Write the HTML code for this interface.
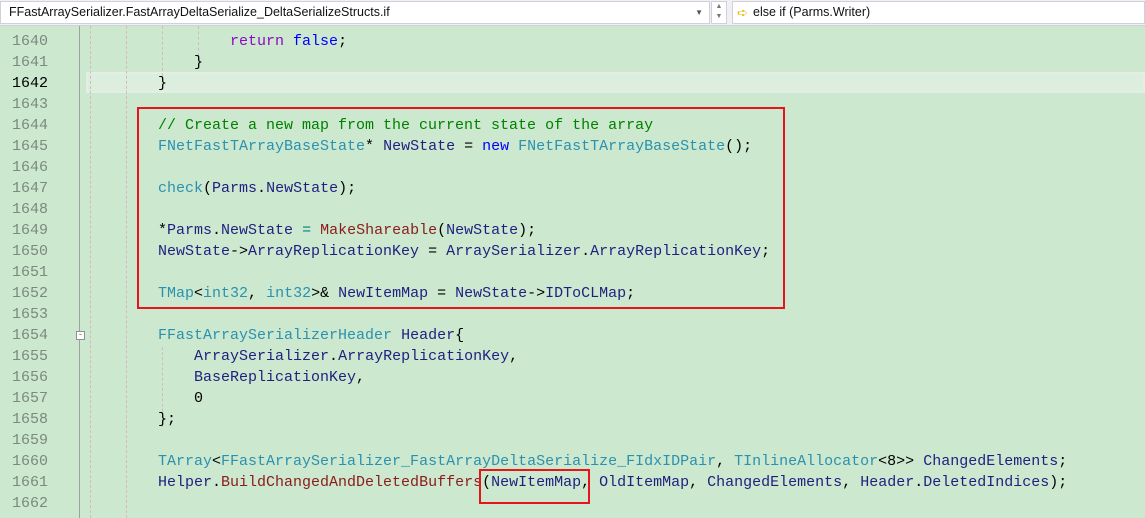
<!DOCTYPE html>
<html><head><meta charset="utf-8">
<style>
*{margin:0;padding:0;box-sizing:border-box}
body{width:1145px;height:518px;overflow:hidden;background:#cce8cf;position:relative;font-family:"Liberation Mono",monospace}
#hdr{position:absolute;left:0;top:0;width:1145px;height:26px;background:#f0f0f5;border-bottom:1px solid #cfd0d8}
.box{position:absolute;top:1px;height:23px;background:#fff;border:1px solid #d0d0da;font-family:"Liberation Sans",sans-serif;font-size:12.5px;line-height:21px;color:#111}
#gut{position:absolute;left:0;top:26px;width:80px;height:492px;border-right:1px solid #a0a0a0}
.ln{position:absolute;left:12px;font-size:15px;color:#7a8a7d;height:21px;line-height:21px}
.cl{position:absolute;left:158px;font-size:15px;white-space:pre;height:21px;line-height:21px;color:#000}
.g{position:absolute;width:0;border-left:1px dashed #d8b8c0}
.t{color:#2b91af}.v{color:#1f1f80}.k{color:#0000ff}.c{color:#008000}.f{color:#8b1c1c}.p{color:#8f08c4}.o{color:#008080}
.red{position:absolute;border:2px solid #e8141c}
</style></head><body>
<div id="hdr">
 <div class="box" style="left:0;width:710px;padding-left:8px">FFastArraySerializer.FastArrayDeltaSerialize_DeltaSerializeStructs.if<span style="position:absolute;right:6px;top:0;font-size:8px;color:#555">▼</span></div>
 <div class="box" style="left:711px;width:16px;font-size:7px;line-height:10px;text-align:center;color:#777">▲<br>▼</div>
 <div class="box" style="left:732px;width:413px;padding-left:20px"><span style="position:absolute;left:4px;top:0;color:#e8b800;font-size:13px">➪</span>else if (Parms.Writer)</div>
</div>
<div id="gut"></div>
<div style="position:absolute;left:86px;top:72px;width:1059px;height:21px;background:#dcefdf;border:2px solid #e4eee6"></div>
<div style="position:absolute;left:76px;top:331px;width:9px;height:9px;border:1px solid #909090;background:#fff;font-size:9px;line-height:6px;text-align:center;color:#666">-</div>
<div class="g" style="left:90px;top:26px;height:492px"></div>
<div class="g" style="left:126px;top:26px;height:492px"></div>
<div class="g" style="left:162px;top:26px;height:50px"></div>
<div class="g" style="left:198px;top:26px;height:30px"></div>
<div class="g" style="left:162px;top:347px;height:80px"></div>

<div class="ln" style="top:31px">1640</div>
<div class="ln" style="top:52px">1641</div>
<div class="ln" style="top:73px;color:#000">1642</div>
<div class="ln" style="top:94px">1643</div>
<div class="ln" style="top:115px">1644</div>
<div class="ln" style="top:136px">1645</div>
<div class="ln" style="top:157px">1646</div>
<div class="ln" style="top:178px">1647</div>
<div class="ln" style="top:199px">1648</div>
<div class="ln" style="top:220px">1649</div>
<div class="ln" style="top:241px">1650</div>
<div class="ln" style="top:262px">1651</div>
<div class="ln" style="top:283px">1652</div>
<div class="ln" style="top:304px">1653</div>
<div class="ln" style="top:325px">1654</div>
<div class="ln" style="top:346px">1655</div>
<div class="ln" style="top:367px">1656</div>
<div class="ln" style="top:388px">1657</div>
<div class="ln" style="top:409px">1658</div>
<div class="ln" style="top:430px">1659</div>
<div class="ln" style="top:451px">1660</div>
<div class="ln" style="top:472px">1661</div>
<div class="ln" style="top:493px">1662</div>

<div class="cl" style="top:31px">        <span class="p">return</span> <span class="k">false</span>;</div>
<div class="cl" style="top:52px">    }</div>
<div class="cl" style="top:73px">}</div>
<div class="cl" style="top:115px"><span class="c">// Create a new map from the current state of the array</span></div>
<div class="cl" style="top:136px"><span class="t">FNetFastTArrayBaseState</span>* <span class="v">NewState</span> = <span class="k">new</span> <span class="t">FNetFastTArrayBaseState</span>();</div>
<div class="cl" style="top:178px"><span class="t">check</span>(<span class="v">Parms</span>.<span class="v">NewState</span>);</div>
<div class="cl" style="top:220px">*<span class="v">Parms</span>.<span class="v">NewState</span> <span class="o">=</span> <span class="f">MakeShareable</span>(<span class="v">NewState</span>);</div>
<div class="cl" style="top:241px"><span class="v">NewState</span>-&gt;<span class="v">ArrayReplicationKey</span> = <span class="v">ArraySerializer</span>.<span class="v">ArrayReplicationKey</span>;</div>
<div class="cl" style="top:283px"><span class="t">TMap</span>&lt;<span class="t">int32</span>, <span class="t">int32</span>&gt;&amp; <span class="v">NewItemMap</span> = <span class="v">NewState</span>-&gt;<span class="v">IDToCLMap</span>;</div>
<div class="cl" style="top:325px"><span class="t">FFastArraySerializerHeader</span> <span class="v">Header</span>{</div>
<div class="cl" style="top:346px">    <span class="v">ArraySerializer</span>.<span class="v">ArrayReplicationKey</span>,</div>
<div class="cl" style="top:367px">    <span class="v">BaseReplicationKey</span>,</div>
<div class="cl" style="top:388px">    0</div>
<div class="cl" style="top:409px">};</div>
<div class="cl" style="top:451px"><span class="t">TArray</span>&lt;<span class="t">FFastArraySerializer_FastArrayDeltaSerialize_FIdxIDPair</span>, <span class="t">TInlineAllocator</span>&lt;8&gt;&gt; <span class="v">ChangedElements</span>;</div>
<div class="cl" style="top:472px"><span class="v">Helper</span>.<span class="f">BuildChangedAndDeletedBuffers</span>(<span class="v">NewItemMap</span>, <span class="v">OldItemMap</span>, <span class="v">ChangedElements</span>, <span class="v">Header</span>.<span class="v">DeletedIndices</span>);</div>

<div class="red" style="left:137px;top:107px;width:648px;height:202px"></div>
<div class="red" style="left:479px;top:469px;width:111px;height:35px"></div>
</body></html>
